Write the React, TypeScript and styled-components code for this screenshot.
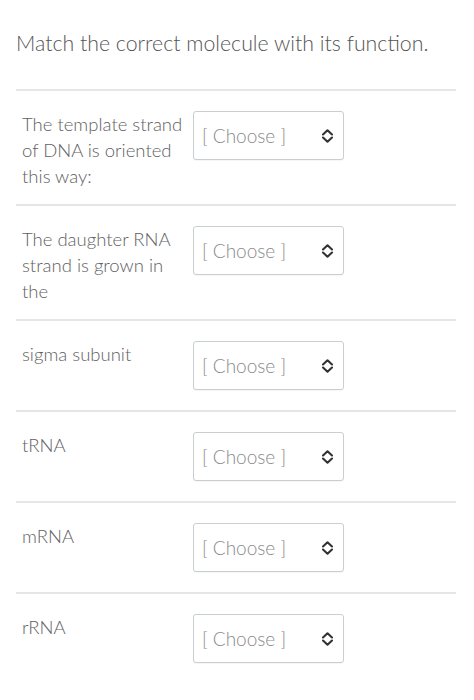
import React from "react";
import styled, { createGlobalStyle } from "styled-components";

const GlobalStyle = createGlobalStyle`
  html, body {
    margin: 0;
    padding: 0;
    background: #ffffff;
  }
  body {
    font-family: Lato, "Noto Sans", "Liberation Sans", sans-serif;
    font-weight: 300;
  }
`;

const Page = styled.div`
  width: 474px;
  box-sizing: border-box;
  padding: 0 18px 0 16px;
`;

const Title = styled.h1`
  margin: 0;
  padding: 29px 0 0;
  height: 89px;
  box-sizing: border-box;
  font-size: 21.3px;
  font-weight: 300;
  line-height: 28px;
  color: #555555;
`;

const Divider = styled.hr`
  margin: 0;
  border: none;
  height: 2px;
  background: #e6e6e6;
`;

const Row = styled.div`
  display: flex;
  align-items: flex-start;
  padding: 20px 0 15px 6px;
`;

const Label = styled.div`
  width: 166px;
  margin-right: 5px;
  font-size: 18.5px;
  line-height: 26px;
  color: #616161;
`;

const SelectWrap = styled.div`
  position: relative;
  width: 151px;
  height: 49px;
  margin-bottom: 5px;
`;

const Select = styled.select`
  appearance: none;
  -webkit-appearance: none;
  width: 100%;
  height: 100%;
  box-sizing: border-box;
  margin: 0;
  padding: 0 30px 0 8px;
  border: 1px solid #c8ced2;
  border-radius: 3px;
  background: #ffffff;
  box-shadow: 0 1px 1px rgba(0, 0, 0, 0.04);
  font-family: inherit;
  font-weight: 300;
  font-size: 19px;
  color: #8a8a8a;
  outline: none;
`;

const Chevron = styled.svg`
  position: absolute;
  right: 10px;
  top: 50%;
  transform: translateY(-50%);
  pointer-events: none;
`;

const items = [
  "The template strand of DNA is oriented this way:",
  "The daughter RNA strand is grown in the",
  "sigma subunit",
  "tRNA",
  "mRNA",
  "rRNA",
];

function UpDown() {
  return (
    <Chevron width="13" height="15" viewBox="0 0 13 15" fill="none">
      <path
        d="M2 6 L6.5 1.8 L11 6 M2 9 L6.5 13.2 L11 9"
        stroke="#333"
        strokeWidth="2.1"
        strokeLinecap="round"
        strokeLinejoin="round"
      />
    </Chevron>
  );
}

export default function App() {
  return (
    <Page>
      <GlobalStyle />
      <Title>Match the correct molecule with its function.</Title>
      {items.map((text) => (
        <React.Fragment key={text}>
          <Divider />
          <Row>
            <Label>{text}</Label>
            <SelectWrap>
              <Select defaultValue="">
                <option value="">[ Choose ]</option>
              </Select>
              <UpDown />
            </SelectWrap>
          </Row>
        </React.Fragment>
      ))}
    </Page>
  );
}
